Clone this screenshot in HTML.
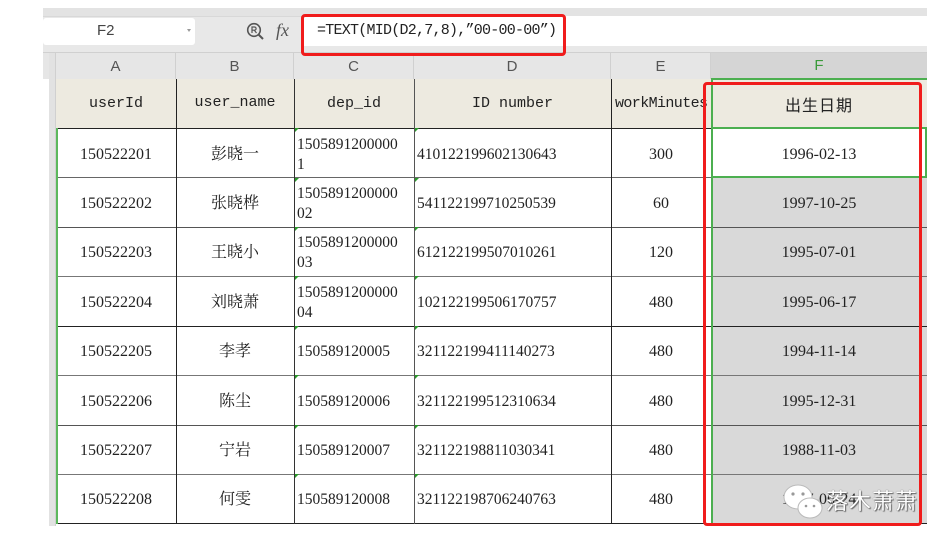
<!DOCTYPE html>
<html><head><meta charset="utf-8"><style>
*{margin:0;padding:0;box-sizing:border-box}
body{width:949px;height:539px;background:#fff;position:relative;overflow:hidden;font-family:"Liberation Serif","Noto Serif CJK SC",serif;color:#222}
.a{position:absolute}
.c{position:absolute;display:flex;align-items:center;justify-content:center;font-size:16px;text-align:center;padding-top:3px}
.c[style*="left:176px"]{padding-top:0;padding-bottom:2px}
.l{justify-content:flex-start;padding-left:3px;text-align:left;line-height:20px;font-size:15.5px}
.mono{font-family:"Liberation Mono","Noto Sans CJK SC",monospace;font-size:15px;padding-top:0}
.ch{position:absolute;top:53px;height:26px;display:flex;align-items:center;justify-content:center;font-family:"Liberation Sans",sans-serif;font-size:15px;color:#555;border-right:1px solid #d0d0d0}
.tri{position:absolute;width:0;height:0;border-top:4px solid #2a9a2a;border-right:4px solid transparent}
</style></head><body>
<div class="a" style="left:43px;top:8px;width:884px;height:45px;background:#e8e8e8"></div>
<div class="a" style="left:43px;top:8px;width:884px;height:9px;background:#e3e3e3;border-bottom:1px solid #d8d8d8"></div>
<div class="a" style="left:43px;top:18px;width:152px;height:27px;background:#fff;border-radius:3px"></div>
<div class="a" style="left:97px;top:22px;font-family:'Liberation Sans',sans-serif;font-size:15px;color:#444">F2</div>
<div class="a" style="left:187px;top:29px;width:0;height:0;border-left:2.5px solid transparent;border-right:2.5px solid transparent;border-top:3px solid #999"></div>
<svg class="a" style="left:246px;top:22px" width="20" height="20" viewBox="0 0 20 20"><circle cx="8" cy="8" r="6.3" fill="none" stroke="#555" stroke-width="1.6"/><path d="M12.5 12.5 L17 17" stroke="#555" stroke-width="2"/><path d="M6 11V5h2.5a1.6 1.6 0 010 3.2H6M8.3 8.2L10.5 11" fill="none" stroke="#555" stroke-width="1.2"/></svg>
<div class="a" style="left:276px;top:20px;font-family:'Liberation Serif',serif;font-style:italic;font-size:18px;color:#555">fx</div>
<div class="a" style="left:303px;top:16px;width:624px;height:30px;background:#fff"></div>
<div class="a" style="left:317px;top:22px;font-family:'Liberation Mono',monospace;font-size:15px;letter-spacing:-0.75px;color:#222">=TEXT(MID(D2,7,8),”00-00-00”)</div>

<div class="a" style="left:43px;top:52px;width:884px;height:1px;background:#d0d0d0"></div>
<div class="a" style="left:43px;top:53px;width:884px;height:26px;background:#e6e6e6"></div>
<div class="a" style="left:49px;top:53px;width:7px;height:473px;background:#e2e2e2;border-right:1px solid #d0d0d0"></div>
<div class="ch" style="left:56px;width:120px">A</div>
<div class="ch" style="left:176px;width:118px">B</div>
<div class="ch" style="left:294px;width:120px">C</div>
<div class="ch" style="left:414px;width:197px">D</div>
<div class="ch" style="left:611px;width:100px">E</div>
<div class="ch" style="left:711px;width:216px;background:#d5d5d5;color:#3a9a3a;border-right:none;border-bottom:2px solid #4caf50;height:27px">F</div>

<div class="a" style="left:56px;top:79px;width:871px;height:49px;background:#edeae0"></div>
<div class="c mono" style="left:56px;top:79px;width:120px;height:49px">userId</div>
<div class="c mono" style="left:176px;top:79px;width:118px;height:49px">user_name</div>
<div class="c mono" style="left:294px;top:79px;width:120px;height:49px">dep_id</div>
<div class="c mono" style="left:414px;top:79px;width:197px;height:49px">ID number</div>
<div class="c mono" style="left:611px;top:79px;width:100px;height:49px;justify-content:flex-start;padding-left:4px;overflow:hidden;white-space:nowrap;letter-spacing:-0.6px">workMinutes</div>
<div class="c" style="left:711px;top:79px;width:216px;height:49px;padding-top:0;font-family:'Noto Sans CJK SC',sans-serif;letter-spacing:1px">出生日期</div>
<div class="a" style="left:711px;top:178px;width:216px;height:346px;background:#d9d9d9"></div>

<div class="a" style="left:56px;top:128px;width:871px;height:1px;background:#222"></div>
<div class="a" style="left:56px;top:177px;width:871px;height:1px;background:#666"></div>
<div class="a" style="left:56px;top:227px;width:871px;height:1px;background:#555"></div>
<div class="a" style="left:56px;top:276px;width:871px;height:1px;background:#777"></div>
<div class="a" style="left:56px;top:326px;width:871px;height:1px;background:#222"></div>
<div class="a" style="left:56px;top:375px;width:871px;height:1px;background:#777"></div>
<div class="a" style="left:56px;top:425px;width:871px;height:1px;background:#555"></div>
<div class="a" style="left:56px;top:474px;width:871px;height:1px;background:#777"></div>
<div class="a" style="left:56px;top:523px;width:871px;height:1px;background:#222"></div>
<div class="a" style="left:56px;top:128px;width:2px;height:396px;background:#5cb85c"></div>
<div class="a" style="left:176px;top:79px;width:1px;height:445px;background:#222"></div>
<div class="a" style="left:294px;top:79px;width:1px;height:445px;background:#333"></div>
<div class="a" style="left:414px;top:79px;width:1px;height:445px;background:#555"></div>
<div class="a" style="left:611px;top:79px;width:1px;height:445px;background:#222"></div>
<div class="a" style="left:711px;top:79px;width:2px;height:445px;background:#4caf50"></div>
<div class="a" style="left:711px;top:127px;width:216px;height:51px;border:2px solid #4caf50;background:#fff"></div>
<div class="a" style="left:711px;top:79px;width:216px;height:49px;border-top:1px solid #4caf50"></div>

<div class="c" style="left:56px;top:128px;width:120px;height:50px">150522201</div><div class="c" style="left:176px;top:128px;width:118px;height:50px">彭晓一</div><div class="c l" style="left:294px;top:128px;width:120px;height:50px">1505891200000<br>1</div><div class="c l" style="left:414px;top:128px;width:197px;height:50px">410122199602130643</div><div class="c" style="left:611px;top:128px;width:100px;height:50px">300</div><div class="c" style="left:711px;top:128px;width:216px;height:50px">1996-02-13</div>
<div class="c" style="left:56px;top:178px;width:120px;height:49px">150522202</div><div class="c" style="left:176px;top:178px;width:118px;height:49px">张晓桦</div><div class="c l" style="left:294px;top:178px;width:120px;height:49px">1505891200000<br>02</div><div class="c l" style="left:414px;top:178px;width:197px;height:49px">541122199710250539</div><div class="c" style="left:611px;top:178px;width:100px;height:49px">60</div><div class="c" style="left:711px;top:178px;width:216px;height:49px">1997-10-25</div>
<div class="c" style="left:56px;top:227px;width:120px;height:49px">150522203</div><div class="c" style="left:176px;top:227px;width:118px;height:49px">王晓小</div><div class="c l" style="left:294px;top:227px;width:120px;height:49px">1505891200000<br>03</div><div class="c l" style="left:414px;top:227px;width:197px;height:49px">612122199507010261</div><div class="c" style="left:611px;top:227px;width:100px;height:49px">120</div><div class="c" style="left:711px;top:227px;width:216px;height:49px">1995-07-01</div>
<div class="c" style="left:56px;top:276px;width:120px;height:50px">150522204</div><div class="c" style="left:176px;top:276px;width:118px;height:50px">刘晓萧</div><div class="c l" style="left:294px;top:276px;width:120px;height:50px">1505891200000<br>04</div><div class="c l" style="left:414px;top:276px;width:197px;height:50px">102122199506170757</div><div class="c" style="left:611px;top:276px;width:100px;height:50px">480</div><div class="c" style="left:711px;top:276px;width:216px;height:50px">1995-06-17</div>
<div class="c" style="left:56px;top:326px;width:120px;height:49px">150522205</div><div class="c" style="left:176px;top:326px;width:118px;height:49px">李孝</div><div class="c l" style="left:294px;top:326px;width:120px;height:49px">150589120005</div><div class="c l" style="left:414px;top:326px;width:197px;height:49px">321122199411140273</div><div class="c" style="left:611px;top:326px;width:100px;height:49px">480</div><div class="c" style="left:711px;top:326px;width:216px;height:49px">1994-11-14</div>
<div class="c" style="left:56px;top:375px;width:120px;height:50px">150522206</div><div class="c" style="left:176px;top:375px;width:118px;height:50px">陈尘</div><div class="c l" style="left:294px;top:375px;width:120px;height:50px">150589120006</div><div class="c l" style="left:414px;top:375px;width:197px;height:50px">321122199512310634</div><div class="c" style="left:611px;top:375px;width:100px;height:50px">480</div><div class="c" style="left:711px;top:375px;width:216px;height:50px">1995-12-31</div>
<div class="c" style="left:56px;top:425px;width:120px;height:49px">150522207</div><div class="c" style="left:176px;top:425px;width:118px;height:49px">宁岩</div><div class="c l" style="left:294px;top:425px;width:120px;height:49px">150589120007</div><div class="c l" style="left:414px;top:425px;width:197px;height:49px">321122198811030341</div><div class="c" style="left:611px;top:425px;width:100px;height:49px">480</div><div class="c" style="left:711px;top:425px;width:216px;height:49px">1988-11-03</div>
<div class="c" style="left:56px;top:474px;width:120px;height:49px">150522208</div><div class="c" style="left:176px;top:474px;width:118px;height:49px">何雯</div><div class="c l" style="left:294px;top:474px;width:120px;height:49px">150589120008</div><div class="c l" style="left:414px;top:474px;width:197px;height:49px">321122198706240763</div><div class="c" style="left:611px;top:474px;width:100px;height:49px">480</div><div class="c" style="left:711px;top:474px;width:216px;height:49px">1987-06-24</div>

<div class="tri" style="left:295px;top:128px"></div><div class="tri" style="left:415px;top:128px"></div>
<div class="tri" style="left:295px;top:178px"></div><div class="tri" style="left:415px;top:178px"></div>
<div class="tri" style="left:295px;top:227px"></div><div class="tri" style="left:415px;top:227px"></div>
<div class="tri" style="left:295px;top:276px"></div><div class="tri" style="left:415px;top:276px"></div>
<div class="tri" style="left:295px;top:326px"></div><div class="tri" style="left:415px;top:326px"></div>
<div class="tri" style="left:295px;top:375px"></div><div class="tri" style="left:415px;top:375px"></div>
<div class="tri" style="left:295px;top:425px"></div><div class="tri" style="left:415px;top:425px"></div>
<div class="tri" style="left:295px;top:474px"></div><div class="tri" style="left:415px;top:474px"></div>

<svg class="a" style="left:783px;top:484px" width="46" height="38" viewBox="0 0 46 38"><ellipse cx="15" cy="13" rx="14" ry="12" fill="#fff" stroke="#bbb" stroke-width="1"/><ellipse cx="27" cy="24" rx="12" ry="10" fill="#fff" stroke="#bbb" stroke-width="1"/><circle cx="10" cy="10" r="1.6" fill="#999"/><circle cx="20" cy="10" r="1.6" fill="#999"/><circle cx="23" cy="22" r="1.3" fill="#999"/><circle cx="31" cy="22" r="1.3" fill="#999"/></svg>
<div class="a" style="left:826px;top:484px;font-family:'Noto Sans CJK SC',sans-serif;font-size:22px;color:#fff;letter-spacing:1px;text-shadow:0 0 1px #555,1px 1px 1px #666">落木萧萧</div>
<div class="a" style="left:703px;top:82px;width:219px;height:444px;border:3px solid #f01c1c;border-radius:4px;z-index:5"></div>
<div class="a" style="left:301px;top:14px;width:265px;height:42px;border:3px solid #f01c1c;border-radius:4px;z-index:5"></div>
</body></html>
